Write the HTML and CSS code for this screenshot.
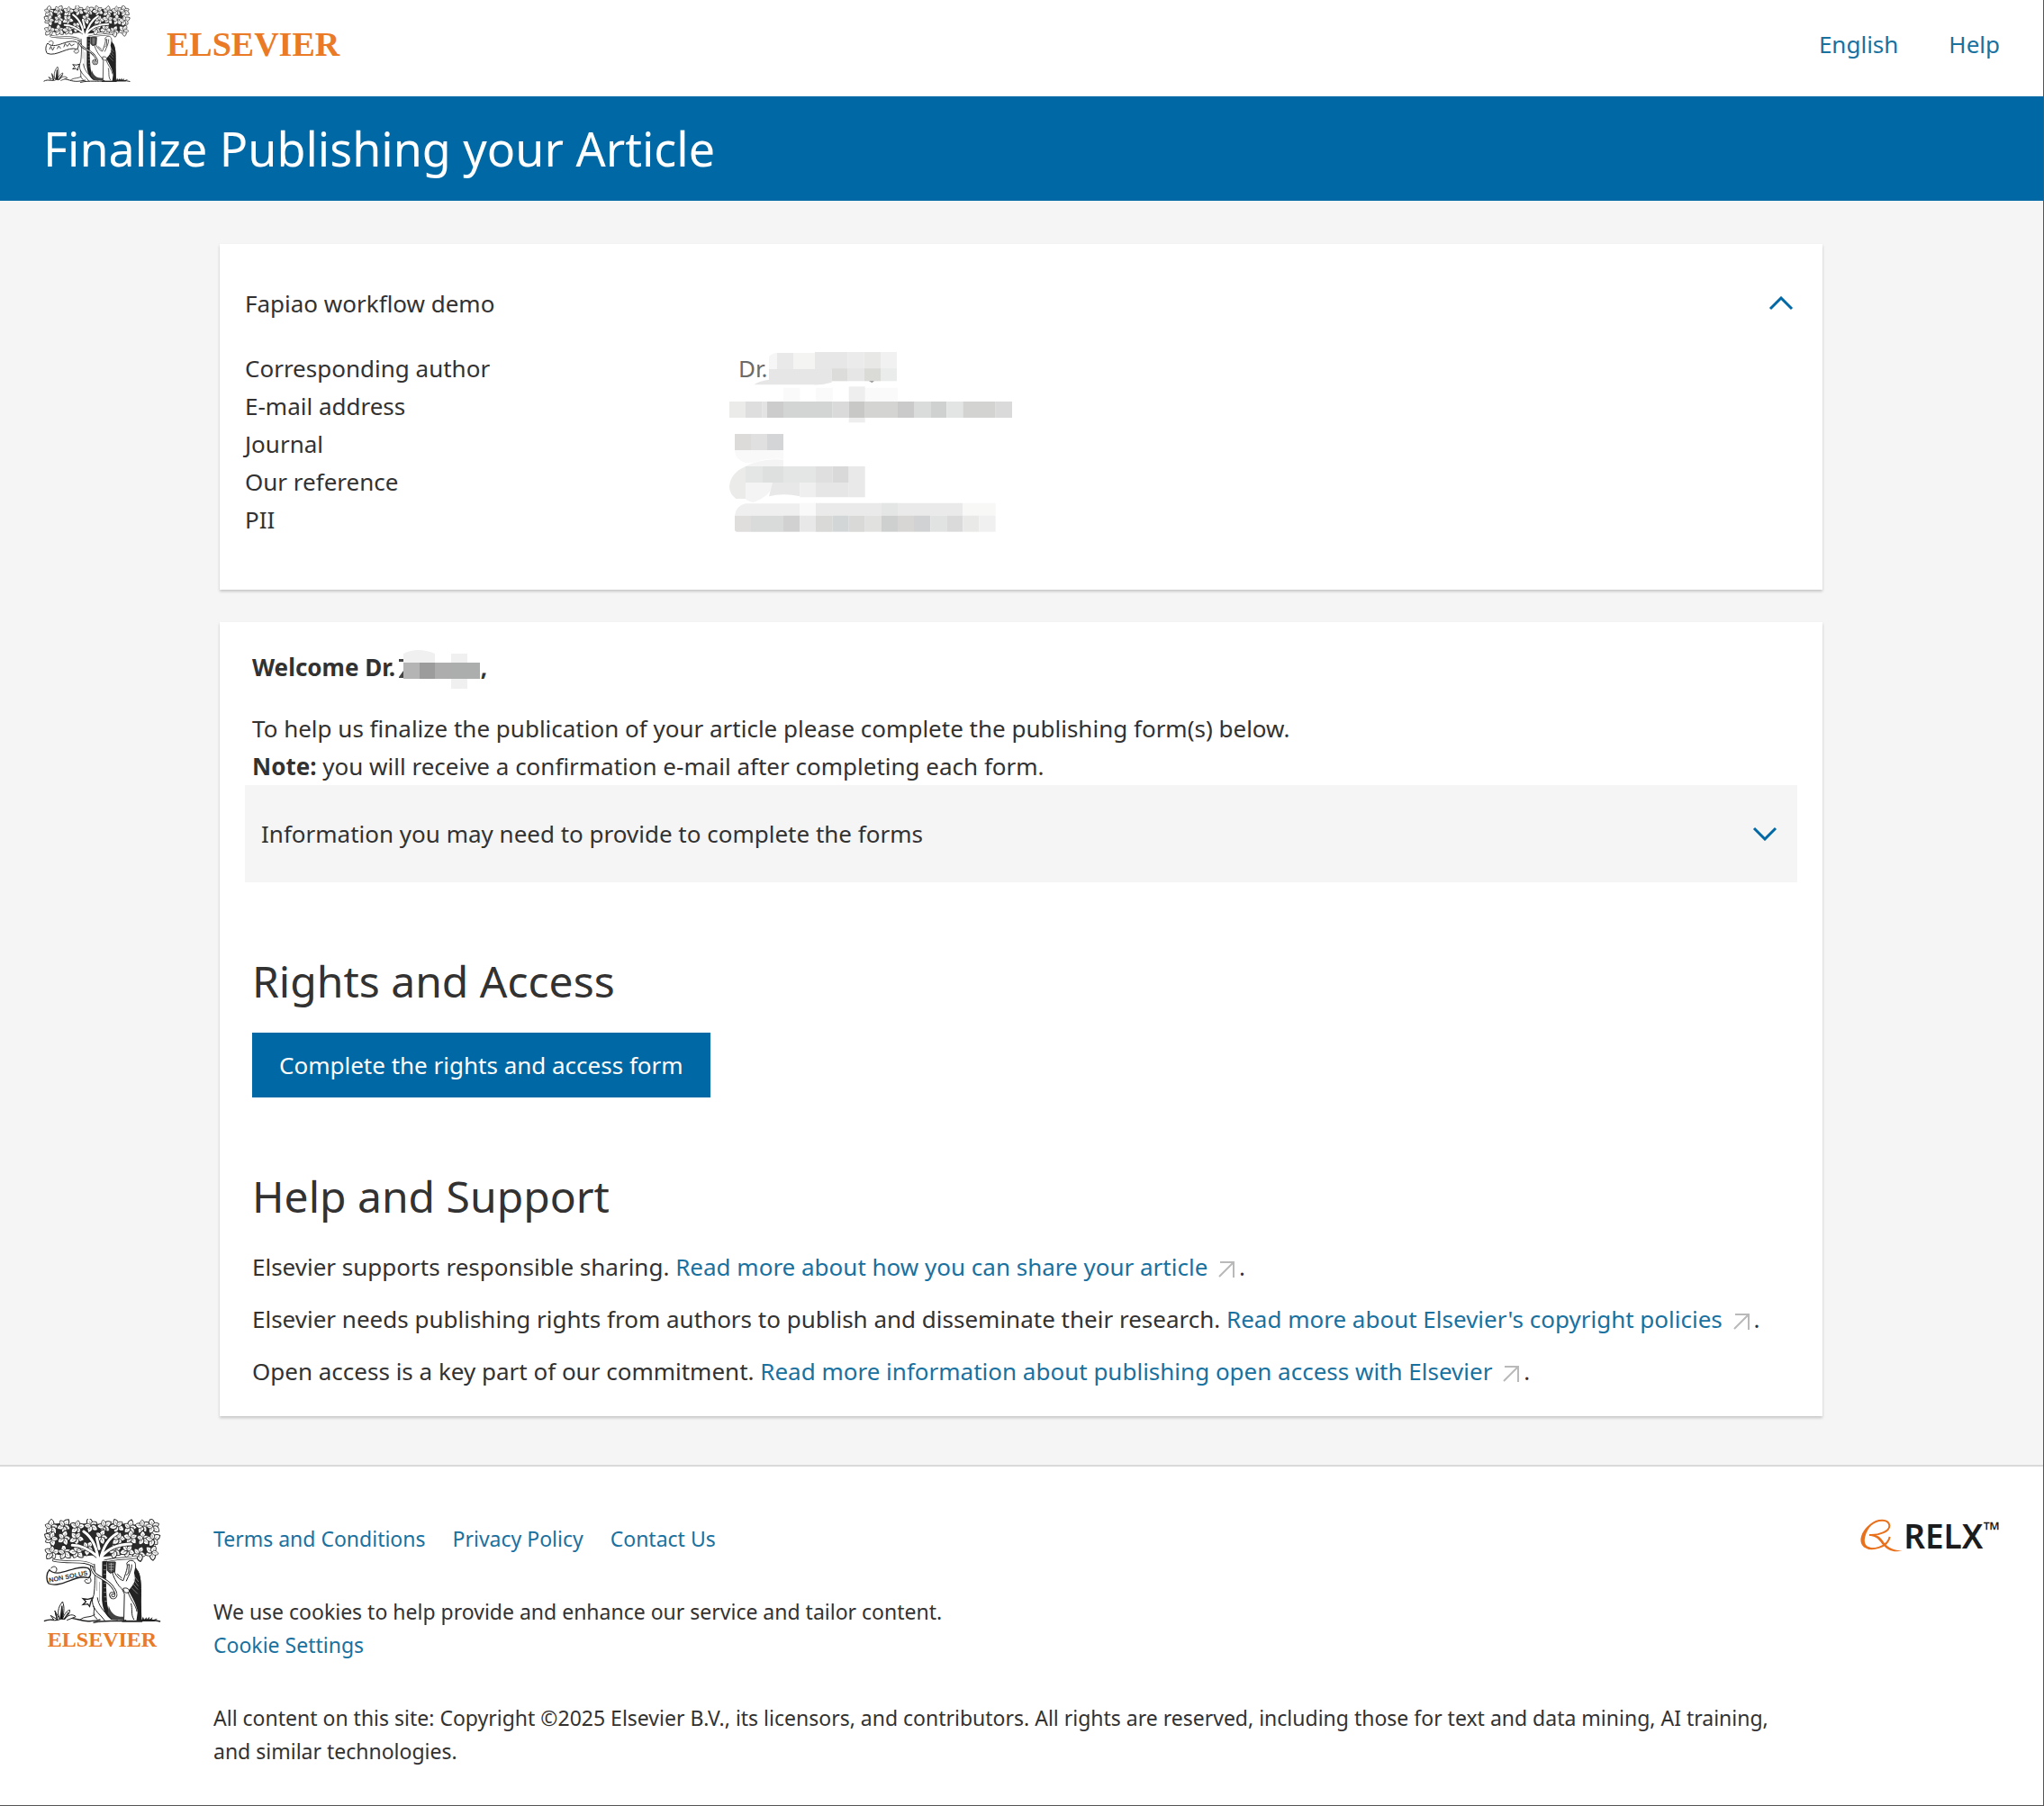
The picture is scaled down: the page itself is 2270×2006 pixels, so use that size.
FILE: index.html
```html
<!DOCTYPE html>
<html lang="en">
<head>
    <meta charset="UTF-8">
    <meta name="viewport" content="width=device-width, initial-scale=1.0">
    <title>Finalize Publishing your Article</title>
    <link rel="stylesheet" href="styles.css">
</head>
<body>

    <!-- shared drawings -->
    <svg class="defs" aria-hidden="true">
        <g id="twig">
            <g fill="#fff" stroke="#222" stroke-width="3">
                <path id="lf" d="M0 0C-13-5-12-18 1-27C13-18 11-5 0 0Z"/>
                <use href="#lf" transform="rotate(78) scale(.85)"/>
                <use href="#lf" transform="rotate(140)"/>
                <use href="#lf" transform="rotate(215) scale(.9)"/>
                <use href="#lf" transform="rotate(290) scale(.8)"/>
            </g>
            <path d="M1-4V-16M4 0L14-3M4 5L11 13M-4 5L-10 12M-5-1L-14-5" fill="none" stroke="#777" stroke-width="2"/>
        </g>
        <symbol id="tree" viewBox="0 0 392 348">
            <!-- crown -->
            <path d="M20 18L60 14L100 20L150 14L200 18L250 14L300 20L340 14L366 24L358 60L370 86L358 112L330 122L300 116L205 126L160 122L110 126L50 120L30 112L24 86L34 60Z" fill="#2a2a2a"/>
            <use href="#twig" x="26" y="28"/>
            <use href="#twig" transform="translate(68 24) rotate(35)"/>
            <use href="#twig" transform="translate(112 27) rotate(80)"/>
            <use href="#twig" transform="translate(158 23) rotate(-20)"/>
            <use href="#twig" transform="translate(203 25) rotate(55)"/>
            <use href="#twig" transform="translate(246 24) rotate(120)"/>
            <use href="#twig" transform="translate(288 29) rotate(10)"/>
            <use href="#twig" transform="translate(330 25) rotate(65)"/>
            <use href="#twig" transform="translate(364 26) rotate(-15)"/>
            <use href="#twig" transform="translate(27 66) rotate(160)"/>
            <use href="#twig" transform="translate(68 64) rotate(15)"/>
            <use href="#twig" transform="translate(110 64) rotate(100)"/>
            <use href="#twig" transform="translate(192 60) rotate(20)"/>
            <use href="#twig" transform="translate(250 66) rotate(85)"/>
            <use href="#twig" transform="translate(292 62) rotate(140)"/>
            <use href="#twig" transform="translate(332 66) rotate(-5)"/>
            <use href="#twig" transform="translate(365 68) rotate(60)"/>
            <use href="#twig" transform="translate(28 112) rotate(75)"/>
            <use href="#twig" transform="translate(70 112) rotate(-10)"/>
            <use href="#twig" transform="translate(112 110) rotate(130)"/>
            <use href="#twig" transform="translate(146 96) rotate(40)"/>
            <use href="#twig" transform="translate(238 106) rotate(50)"/>
            <use href="#twig" transform="translate(280 106) rotate(110)"/>
            <use href="#twig" transform="translate(318 116) rotate(25)"/>
            <use href="#twig" transform="translate(362 112) rotate(170)"/>
            <!-- boughs -->
            <g fill="none" stroke-linecap="round">
                <path d="M184 150C180 90 160 60 134 42M188 140C200 92 216 66 246 48M181 126C158 106 130 88 96 88M192 128C220 92 256 84 292 84M186 100L178 64" stroke="#222" stroke-width="13"/>
                <path d="M184 150C180 90 160 60 134 42M188 140C200 92 216 66 246 48M181 126C158 106 130 88 96 88M192 128C220 92 256 84 292 84M186 100L178 64" stroke="#fff" stroke-width="9"/>
                <path d="M168 158C138 134 88 150 34 138M200 142C238 130 270 134 310 128" stroke="#222" stroke-width="9"/>
                <path d="M168 157C138 134 88 149 34 138M196 143C238 130 270 134 310 128" stroke="#fff" stroke-width="5"/>
            </g>
            <!-- trunk -->
            <path d="M168 132L202 126C196 186 199 236 204 280C208 310 228 328 246 338L136 340C150 334 164 326 168 314C158 300 158 278 168 262C173 220 170 178 168 132Z" fill="#fff"/>
            <path d="M196 142L212 140C207 190 209 245 213 286C218 315 232 328 250 338L226 336C205 320 196 296 195 266Z" fill="#222"/>
            <path d="M170 150C173 190 172 226 168 254C158 274 162 296 192 324L207 342M180 262C184 290 198 304 222 330M166 290C176 306 157 320 180 334M172 318C154 332 138 322 122 337" fill="none" stroke="#222" stroke-width="3"/>
            <path d="M187 210V276M178 190V240" stroke="#888" stroke-width="2"/>
            <path d="M201 155H210M200 170H209M200 185H209M200 200H209M201 215H210M201 230H210M201 245H211M202 260H212M204 275H213" stroke="#aaa" stroke-width="2"/>
            <path d="M164 264L148 268L132 266L142 276L132 286L148 284L154 292L158 276Z" fill="#fff" stroke="#222" stroke-width="4"/>
            <!-- vine -->
            <path d="M160 160C166 200 216 194 236 236C248 254 240 268 228 262C220 254 224 245 234 248" fill="none" stroke="#222" stroke-width="9" stroke-linecap="round"/>
            <path d="M160 160C166 200 216 194 236 236C248 254 240 268 228 262C220 254 224 245 234 248" fill="none" stroke="#fff" stroke-width="4" stroke-linecap="round"/>
            <!-- banner -->
            <path d="M24 166C38 150 52 166 40 178M150 190C164 202 160 218 144 214C132 208 140 198 148 204" fill="#fff" stroke="#222" stroke-width="3"/>
            <path d="M20 170C50 202 104 150 148 164C160 170 160 192 150 197C112 182 60 232 18 216C8 204 10 180 20 170Z" fill="#fff" stroke="#222" stroke-width="4"/>
            <!-- old man -->
            <path d="M214 144H240L238 176L222 181L213 172Z" fill="#444" stroke="#222" stroke-width="3"/>
            <path d="M218 151H235M218 160H235M219 169H233M226 147V176" stroke="#bbb" stroke-width="2"/>
            <path d="M236 176C242 190 254 203 266 206L274 182C278 168 282 160 278 148C284 136 302 136 306 148C309 158 304 166 314 174C326 198 326 236 324 276L326 340H268L270 250L262 234C248 222 236 200 230 180Z" fill="#fff" stroke="#222" stroke-width="3"/>
            <path d="M306 162C324 178 326 200 325 246L327 340H310L314 310C308 276 290 256 284 238C306 216 308 200 302 180Z" fill="#222"/>
            <path d="M302 190L317 210M300 202L316 224M298 216L315 236M294 230L314 250" stroke="#aaa" stroke-width="2"/>
            <path d="M280 154L286 152L284 180L276 188M294 152C296 166 284 190 276 208M266 232C278 228 288 234 286 244C278 250 266 246 266 232M282 244C290 270 308 286 312 310M292 282C298 300 290 318 302 336M246 184L262 198" fill="none" stroke="#222" stroke-width="3"/>
            <!-- ground and plants -->
            <path d="M218 290C226 320 246 328 270 326L268 338L230 336L214 316Z" fill="#444"/>
            <path d="M2 341C24 329 34 343 54 335S90 328 118 336S154 342 190 336M166 346C210 335 248 345 276 338M262 342H330M320 340C350 332 366 338 390 342" fill="none" stroke="#222" stroke-width="4"/>
            <path d="M326 342L332 326L336 336L344 328V336L354 326L352 337L364 328L360 338L380 332L370 342Z" fill="#222"/>
            <path d="M58 334C44 320 48 294 64 276C72 296 68 318 62 334C72 316 80 304 88 304C88 318 78 326 68 336M54 334L38 306L46 336M70 336C84 316 100 318 108 326L78 338M44 334L24 322L36 338" fill="#fff" stroke="#222" stroke-width="3"/>
            <path d="M57 332L62 290L65 336M47 336L40 314M68 336L84 312" stroke="#222" stroke-width="4"/>
        </symbol>
        <symbol id="arrow-out" viewBox="0 0 20 20">
            <path d="M3 3H18V20M18 3L2 19" fill="none" stroke="#b9b9b9" stroke-width="2"/>
        </symbol>
    </svg>

    <header class="topbar">
        <a class="brand" href="#" aria-label="Elsevier home">
            <svg class="brand-tree" viewBox="0 0 392 348" aria-hidden="true">
                <use href="#tree"/>
                <path d="M28 198L34 184L42 202L50 186M62 196L70 182L78 194M92 188L98 172L108 184L118 170L126 182L140 174" fill="none" stroke="#444" stroke-width="4"/>
            </svg>
            <span class="brand-name">ELSEVIER</span>
        </a>
        <nav class="topnav">
            <a href="#">English</a>
            <a href="#">Help</a>
        </nav>
    </header>

    <div class="titlebar">
        <h1>Finalize Publishing your Article</h1>
    </div>

    <main class="content">
        <section class="card article">
            <div class="article-head">
                <span>Fapiao workflow demo</span>
                <button class="toggle" type="button" aria-label="Hide article details" aria-expanded="true">
                    <svg viewBox="0 0 28 16"><path d="M2 14L14 2L26 14"/></svg>
                </button>
            </div>
            <dl class="details">
                <dt>Corresponding author</dt>
                <dd>Dr.
                    <svg class="mask" viewBox="222 54 450 126">
                        <path d="M225 78Q236 66 252 66V120H225V82Z" fill="#f6f6f6"/>
                        <path d="M252 66H306V120H252Z" fill="#e9e9e9"/>
                        <path d="M306 66H378V120H306Z" fill="#f4f4f3"/>
                        <path d="M378 63H488V120H378Z" fill="#e7e7e7"/>
                        <path d="M488 63H542V120H488Z" fill="#ebebeb"/>
                        <path d="M542 63H597V120H542Z" fill="#e8e9e6"/>
                        <path d="M597 63H651V120H597Z" fill="#f0f1f0"/>
                        <path d="M225 120H434V164Q400 174 370 172H175Q190 160 225 155Z" fill="#e6e6e6"/>
                        <path d="M434 118H488V160H434Z" fill="#dcdcdb"/>
                        <path d="M488 118H542V160H488Z" fill="#e6e6e6"/>
                        <path d="M542 118H597V160H542Z" fill="#dadad6"/>
                        <path d="M597 118H651V160H597Z" fill="#e9ecea"/>
                        <path d="M558 160H576L568 165Z" fill="#888"/>
                    </svg>
                </dd>
                <dt>E-mail address</dt>
                <dd>
                    <svg class="mask" viewBox="120 180 450 126">
                        <path d="M270 182H325V228H270ZM378 182H434V228H378ZM542 182H651V228H542Z" fill="#fafafa"/>
                        <path d="M488 178H542V298H488Z" fill="#eee"/>
                        <path d="M90 228H144V282H90Z" fill="#ebebea"/>
                        <path d="M144 228H200V282H144Z" fill="#dedede"/>
                        <path d="M200 228H216V282H200Z" fill="#e3e3e3"/>
                        <path d="M216 228H270V282H216Z" fill="#ccc"/>
                        <path d="M270 228H434V282H270Z" fill="#d3d5d5"/>
                        <path d="M434 228H488V282H434Z" fill="#dadada"/>
                        <path d="M488 228H542V282H488Z" fill="#c8c8c7"/>
                        <path d="M542 228H651V282H542Z" fill="#d4d4d2"/>
                        <path d="M651 228H705V282H651Z" fill="#cacaca"/>
                        <path d="M705 228H760V282H705Z" fill="#dadbdb"/>
                        <path d="M760 228H814V282H760Z" fill="#ced1d0"/>
                        <path d="M814 228H868V282H814Z" fill="#e3e4e4"/>
                        <path d="M868 228H977V282H868Z" fill="#d3d4d2"/>
                        <path d="M977 228H1032V282H977Z" fill="#dadada"/>
                    </svg>
                </dd>
                <dt>Journal</dt>
                <dd>
                    <svg class="mask" viewBox="120 306 450 126">
                        <path d="M108 336H162V390H108Z" fill="#dcdbda"/>
                        <path d="M162 336H216V390H162Z" fill="#e0e0e0"/>
                        <path d="M216 336H270V390H216Z" fill="#d3d5d7"/>
                        <path d="M108 390H270V420Q220 415 170 432H144Q110 422 108 390Z" fill="#f9f9f9"/>
                    </svg>
                </dd>
                <dt>Our reference</dt>
                <dd>
                    <svg class="mask" viewBox="120 432 450 126">
                        <path d="M144 444H200V498H144V552H112Q90 535 90 510Q95 465 144 444Z" fill="#ebebea"/>
                        <path d="M144 444Q200 415 270 422V444Z" fill="#f4f4f4"/>
                        <path d="M144 498H234Q234 540 170 564Q150 560 144 552Z" fill="#f4f4f4"/>
                        <path d="M144 444H200V498H144ZM270 444H378V498H270Z" fill="#e4e5e5"/>
                        <path d="M200 444H270V498H200Z" fill="#dde0df"/>
                        <path d="M378 444H434V498H378Z" fill="#dfdfdf"/>
                        <path d="M434 444H488V498H434Z" fill="#d9d9d9"/>
                        <path d="M488 444H542V547H488Z" fill="#e9e9e9"/>
                        <path d="M234 498H325V544Q270 532 222 544Z" fill="#e8e8e8"/>
                        <path d="M325 498H378V547H325Z" fill="#efefef"/>
                        <path d="M378 498H488V547H378Z" fill="#e6e6e6"/>
                    </svg>
                </dd>
                <dt>PII</dt>
                <dd>
                    <svg class="mask" viewBox="120 558 450 126">
                        <path d="M108 608Q112 576 144 568H325V608Z" fill="#efefef"/>
                        <path d="M325 566H378V608H325Z" fill="#f9f9f9"/>
                        <path d="M378 566H597V608H378ZM651 566H868V608H651Z" fill="#eaeaea"/>
                        <path d="M597 566H651V608H597Z" fill="#e4e5e5"/>
                        <path d="M868 566H977V608H868Z" fill="#f8f8f7"/>
                        <path d="M108 608H162V662H116Q108 662 108 654Z" fill="#dfdedd"/>
                        <path d="M162 608H270V662H162Z" fill="#d9dada"/>
                        <path d="M270 608H325V662H270Z" fill="#d1d1d1"/>
                        <path d="M325 608H378V662H325Z" fill="#e8e8e8"/>
                        <path d="M378 608H434V662H378ZM488 608H542V662H488Z" fill="#d9d9d8"/>
                        <path d="M434 608H488V662H434Z" fill="#d2d6d7"/>
                        <path d="M542 608H597V662H542Z" fill="#e1e1df"/>
                        <path d="M597 608H651V662H597Z" fill="#cecfcf"/>
                        <path d="M651 608H705V662H651Z" fill="#d7d6d4"/>
                        <path d="M705 608H760V662H705Z" fill="#d1d2d3"/>
                        <path d="M760 608H814V662H760Z" fill="#e1e2e2"/>
                        <path d="M814 608H868V662H814Z" fill="#d9dad9"/>
                        <path d="M868 608H922V662H868Z" fill="#e9e9e8"/>
                        <path d="M922 608H977V662H922Z" fill="#f0f0f0"/>
                    </svg>
                </dd>
            </dl>
        </section>

        <section class="card forms">
            <p class="welcome">Welcome Dr.
                <svg class="name-mask" viewBox="0 0 92 46" aria-hidden="true">
                    <path d="M1 10H6V13H1ZM1 30L6 23V31H1Z" fill="#444"/>
                    <path d="M6 14V4Q22-4 41 4V14Z" fill="#f0f0f0"/>
                    <path d="M59 4H77V43H59Z" fill="#f0f0f0"/>
                    <path d="M6 14H24V32H6Z" fill="#b3b4b3"/>
                    <path d="M24 14H41V32H24Z" fill="#9c9c9c"/>
                    <path d="M41 14H59V32H41Z" fill="#adadad"/>
                    <path d="M59 14H91V32H59Z" fill="#abaead"/>
                </svg>,</p>
            <p>To help us finalize the publication of your article please complete the publishing form(s) below.<br>
                <strong>Note:</strong> you will receive a confirmation e-mail after completing each form.</p>

            <button class="info" type="button" aria-expanded="false">
                <span>Information you may need to provide to complete the forms</span>
                <svg viewBox="0 0 28 16"><path d="M2 2L14 14L26 2"/></svg>
            </button>

            <h2>Rights and Access</h2>
            <button class="primary" type="button">Complete the rights and access form</button>

            <h2>Help and Support</h2>
            <div class="support">
                <p>Elsevier supports responsible sharing. <a href="#">Read more about how you can share your article <svg class="out"><use href="#arrow-out"/></svg></a>.</p>
                <p>Elsevier needs publishing rights from authors to publish and disseminate their research. <a href="#">Read more about Elsevier's copyright policies <svg class="out"><use href="#arrow-out"/></svg></a>.</p>
                <p>Open access is a key part of our commitment. <a href="#">Read more information about publishing open access with Elsevier <svg class="out"><use href="#arrow-out"/></svg></a>.</p>
            </div>
        </section>
    </main>

    <footer class="footer">
        <a class="footer-brand" href="#" aria-label="Elsevier">
            <svg class="footer-tree" viewBox="0 0 392 348" aria-hidden="true">
                <use href="#tree"/>
                <text class="motto" x="20" y="212" transform="rotate(-11 20 212)">NON SOLUS</text>
            </svg>
            <span class="footer-name">ELSEVIER</span>
        </a>
        <div class="footer-text">
            <nav class="footer-links">
                <a href="#">Terms and Conditions</a>
                <a href="#">Privacy Policy</a>
                <a href="#">Contact Us</a>
            </nav>
            <p>We use cookies to help provide and enhance our service and tailor content.<br>
                <a href="#">Cookie Settings</a></p>
            <p>All content on this site: Copyright ©2025 Elsevier B.V., its licensors, and contributors. All rights are reserved, including those for text and data mining, AI training, and similar technologies.</p>
        </div>
        <a class="relx" href="#" aria-label="RELX">
            <svg viewBox="0 0 144 114" aria-hidden="true">
                <path d="M30 54C62 56 98 42 97 22C94 0 58 0 34 20C4 44-4 76 14 92C36 108 92 96 98 60" fill="none" stroke="#e9711c" stroke-width="6"/>
                <path d="M44 14C8 36-8 74 12 92C24 102 40 100 52 98C20 98 10 84 16 60C20 42 30 26 44 14Z" fill="#e9711c"/>
                <path d="M30 52C60 50 68 64 80 80C92 96 112 106 140 106C114 114 92 106 76 88C64 72 56 58 30 56Z" fill="#e9711c"/>
            </svg>
            <span class="relx-name">RELX</span><span class="relx-tm">™</span>
        </a>
    </footer>

</body>
</html>
```
FILE: styles.css
```css
* {
    box-sizing: border-box;
}

body {
    margin: 0;
    min-height: 100vh;
    display: flex;
    flex-direction: column;
    background-color: #f5f5f5;
    border-right: 1px solid #555;
    border-bottom: 1px solid #555;
    font-family: "Noto Sans", sans-serif;
    font-size: 26px;
    line-height: 42px;
    color: #323232;
}

h1, h2, p, dl, dd {
    margin: 0;
}

a {
    color: #19719f;
    text-decoration: none;
}

button {
    font: inherit;
    border: none;
    cursor: pointer;
}

.defs {
    position: absolute;
    width: 0;
    height: 0;
}

.motto {
    font-family: "Liberation Sans", sans-serif;
    font-size: 22px;
    font-weight: bold;
    fill: #333;
}

/* header */
.topbar {
    display: flex;
    justify-content: space-between;
    align-items: center;
    height: 107px;
    padding: 0 48px 10px;
    background-color: #fff;
}

.brand {
    display: flex;
    align-items: center;
    gap: 40px;
}

.brand-tree {
    width: 97px;
    height: 86px;
}

.brand-name, .footer-name {
    font-family: "Liberation Serif", serif;
    font-weight: bold;
    color: #ea7a26;
}

.brand-name {
    font-size: 38px;
}

.topnav {
    display: flex;
    gap: 56px;
}

.titlebar {
    padding: 28px 48px;
    background-color: #0069a5;
    color: #fff;
}

h1 {
    font-size: 52px;
    line-height: 60px;
    font-weight: normal;
}

/* cards */
.content {
    display: flex;
    flex-direction: column;
    gap: 36px;
    padding: 48px 245px 54px 244px;
}

.card {
    background-color: #fff;
    box-shadow: 0 2px 3px rgba(0, 0, 0, 0.2);
}

.article {
    padding: 45px 28px 57px;
}

.article-head {
    display: flex;
    justify-content: space-between;
    align-items: center;
    margin-bottom: 30px;
}

.toggle {
    display: flex;
    padding: 4px;
    background: none;
}

.toggle svg, .info svg {
    width: 28px;
    height: 16px;
    fill: none;
    stroke: #0069a5;
    stroke-width: 3;
}

.details {
    display: grid;
    grid-template-columns: 548px 1fr;
}

.details dd {
    display: flex;
    color: #6b6b6b;
}

.mask {
    width: 150px;
    height: 42px;
    overflow: visible;
}

.forms {
    padding: 29px 28px;
}

.forms > p, .forms > h2, .support {
    padding-left: 8px;
}

.forms > .welcome {
    font-weight: bold;
    margin-bottom: 26px;
}

.name-mask {
    width: 92px;
    height: 46px;
    margin: -8px 0 -10px -4px;
    vertical-align: middle;
}

.info {
    display: flex;
    justify-content: space-between;
    align-items: center;
    width: 100%;
    padding: 33px 22px 33px 18px;
    background-color: #f5f5f5;
    color: inherit;
    text-align: left;
}

h2 {
    font-size: 48px;
    line-height: 60px;
    font-weight: normal;
    margin: 80px 0 27px;
}

.primary {
    margin-left: 8px;
    padding: 15px 30px;
    background-color: #0069a5;
    color: #fff;
}

.support {
    display: flex;
    flex-direction: column;
    gap: 16px;
}

.out {
    width: 20px;
    height: 20px;
    margin: 0 4px;
    vertical-align: -2px;
}

/* footer */
.footer {
    flex: 1;
    display: flex;
    align-items: flex-start;
    padding: 58px 48px 38px;
    background-color: #fff;
    border-top: 2px solid #d9d9d9;
    font-size: 23px;
    line-height: 37px;
}

.footer-brand {
    display: flex;
    flex-direction: column;
    align-items: center;
}

.footer-tree {
    width: 131px;
    height: 116px;
}

.footer-name {
    font-size: 24px;
}

.footer-text {
    flex: 1;
    display: flex;
    flex-direction: column;
    gap: 44px;
    padding: 4px 96px 0 58px;
}

.footer-links {
    display: flex;
    gap: 30px;
}

.relx {
    display: flex;
    align-items: flex-start;
    color: #1c1c1c;
}

.relx svg {
    width: 48px;
    height: 38px;
}

.relx-name {
    font-size: 37px;
    font-weight: 600;
}

.relx-tm {
    font-size: 24px;
    line-height: 24px;
}
```
